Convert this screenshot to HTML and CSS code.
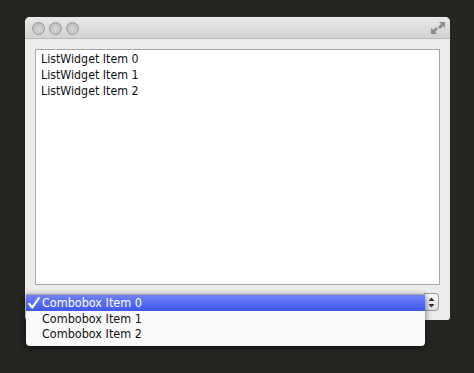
FILE: index.html
```html
<!DOCTYPE html>
<html>
<head>
<meta charset="utf-8">
<link rel="stylesheet" href="styles.css">
</head>
<body>
<div class="desk">
  <div class="window">
    <div class="titlebar">
      <div class="lights">
        <span class="light"></span>
        <span class="light"></span>
        <span class="light"></span>
      </div>
      <svg class="fullscreen" width="16" height="14" viewBox="0 0 16 14">
        <path d="M9 1 L15 1 L15 7 L13 5 L10 8 L8 6 L11 3 Z" fill="#8a8a8a"/>
        <path d="M7 13 L1 13 L1 7 L3 9 L6 6 L8 8 L5 11 Z" fill="#8a8a8a"/>
      </svg>
    </div>
    <div class="content">
      <div class="list">
        <div class="item">ListWidget Item 0</div>
        <div class="item">ListWidget Item 1</div>
        <div class="item">ListWidget Item 2</div>
      </div>
      <div class="comborow">
        <div class="combo">
          <span class="combo-arrows">
            <svg width="7" height="11" viewBox="0 0 7 11">
              <path d="M3.5 0.5 L6.5 4 L0.5 4 Z" fill="#333"/>
              <path d="M3.5 10.5 L6.5 7 L0.5 7 Z" fill="#333"/>
            </svg>
          </span>
        </div>
      </div>
    </div>
  </div>
  <div class="popup">
    <div class="opt selected">
      <svg class="check" width="12" height="12" viewBox="0 0 12 12">
        <path d="M1.2 6.8 L4.2 10.6 L10.8 1.2" fill="none" stroke="#fff" stroke-width="2.2" stroke-linecap="round" stroke-linejoin="round"/>
      </svg>Combobox Item 0</div>
    <div class="opt">Combobox Item 1</div>
    <div class="opt">Combobox Item 2</div>
  </div>
</div>
</body>
</html>
```
FILE: styles.css
```css
html, body {
  margin: 0;
  padding: 0;
  background: #252522;
  height: 100%;
}
.desk {
  position: relative;
  padding: 17px 0 0 25px;
  font-family: "DejaVu Sans Condensed", "DejaVu Sans", sans-serif;
  font-stretch: condensed;
}
.window {
  width: 425px;
  height: 303px;
  background: #ececec;
  border-radius: 5px 5px 3px 3px;
  display: flex;
  flex-direction: column;
  overflow: hidden;
}
.titlebar {
  height: 21px;
  flex: none;
  background: linear-gradient(#eaeaea, #d2d2d2);
  border-bottom: 1px solid #b8b8b8;
  display: flex;
  align-items: center;
  justify-content: space-between;
  padding: 0 4px 0 7px;
}
.lights {
  display: flex;
  gap: 4px;
  margin-top: 1px;
}
.light {
  width: 11px;
  height: 11px;
  border-radius: 50%;
  background: radial-gradient(circle at 50% 60%, #d8d8d8 0%, #c4c4c4 60%, #a8a8a8 100%);
  border: 1px solid #9a9a9a;
}
.fullscreen {
  margin-top: 1px;
}
.content {
  flex: 1;
  display: flex;
  flex-direction: column;
  padding: 10px 10px 0 10px;
}
.list {
  height: 233px;
  background: #fff;
  border: 1px solid #a6a6a6;
  padding: 1px 0 0 5px;
  font-size: 12.3px;
  color: #111;
}
.item {
  height: 16px;
  line-height: 16px;
}
.comborow {
  display: flex;
  justify-content: flex-end;
  padding-top: 8px;
}
.combo {
  width: 14px;
  height: 16px;
  border: 1px solid #9c9c9c;
  border-left: none;
  border-radius: 0 4px 4px 0;
  background: linear-gradient(#fbfbfb, #e0e0e0);
  display: flex;
  align-items: center;
  justify-content: center;
  margin-right: 1px;
}
.combo-arrows svg {
  display: block;
}
.popup {
  position: absolute;
  left: 26px;
  top: 294px;
  width: 399px;
  padding-bottom: 5px;
  background: #fafafa;
  border-top: 1px solid #a0a0a0;
  border-radius: 0 0 4px 4px;
  box-shadow: 0 2px 6px rgba(0,0,0,0.6);
  font-size: 12.5px;
  color: #111;
}
.opt {
  height: 15px;
  line-height: 15px;
  padding-left: 16px;
  position: relative;
}
.opt.selected {
  height: 16px;
  line-height: 16px;
  background: linear-gradient(#6f82f6, #3f58ee);
  color: #fff;
}
.check {
  position: absolute;
  left: 2px;
  top: 2px;
}
```
